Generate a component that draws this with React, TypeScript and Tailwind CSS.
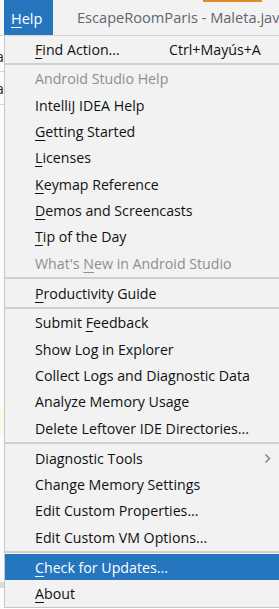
import React from "react";

type Item =
  | { t: string; m?: number; d?: boolean; k?: string; sub?: boolean; sel?: boolean }
  | "sep";

const items: Item[] = [
  { t: "Find Action...", m: 0, k: "Ctrl+Mayús+A" },
  "sep",
  { t: "Android Studio Help", d: true },
  { t: "IntelliJ IDEA Help" },
  { t: "Getting Started", m: 0 },
  { t: "Licenses", m: 0 },
  { t: "Keymap Reference", m: 0 },
  { t: "Demos and Screencasts", m: 0 },
  { t: "Tip of the Day", m: 0 },
  { t: "What's New in Android Studio", m: 7, d: true },
  "sep",
  { t: "Productivity Guide", m: 0 },
  "sep",
  { t: "Submit Feedback", m: 7 },
  { t: "Show Log in Explorer" },
  { t: "Collect Logs and Diagnostic Data" },
  { t: "Analyze Memory Usage" },
  { t: "Delete Leftover IDE Directories..." },
  "sep",
  { t: "Diagnostic Tools", sub: true },
  { t: "Change Memory Settings" },
  { t: "Edit Custom Properties..." },
  { t: "Edit Custom VM Options..." },
  "sep",
  { t: "Check for Updates...", m: 0, sel: true },
  { t: "About", m: 0 },
];

function Label({ t, m }: { t: string; m?: number }) {
  if (m === undefined) return <span>{t}</span>;
  return (
    <span>
      {t.slice(0, m)}
      <span className="underline decoration-1 underline-offset-[3px]">{t[m]}</span>
      {t.slice(m + 1)}
    </span>
  );
}

function Frag() {
  return (
    <div className="h-[16px] w-[4px] overflow-hidden flex items-center">
      <span className="-ml-[4px] text-[14px] leading-none text-[#222]">a</span>
    </div>
  );
}

export default function App() {
  return (
    <div
      className="w-[279px] h-[609px] overflow-hidden bg-white flex flex-col"
      style={{ fontFamily: '"Open Sans", "Noto Sans", sans-serif' }}
    >
      {/* top bar */}
      <div className="h-[35px] flex bg-[#f2f2f2] shrink-0">
        <div className="w-[4px] bg-[#f7f7f7]" />
        <div className="w-[49px] h-full bg-[#2675bf] text-white text-[14.5px] flex items-center pl-[7px] pt-[3px]">
          <Label t="Help" m={0} />
        </div>
        <div className="flex-1 flex flex-col overflow-hidden">
          <div className="h-[2px] flex">
            <div className="w-[150px]" />
            <div className="w-[59px] bg-[#e08a2c]" />
          </div>
          <div className="flex-1 flex items-center pl-[24px] whitespace-nowrap text-[14.6px] text-[#5f6670] pb-[1px]">
            EscapeRoomParis - Maleta.java
          </div>
        </div>
      </div>
      <div className="h-[1px] bg-[#d6d6d6] shrink-0" />
      {/* body */}
      <div className="flex flex-1 min-h-0">
        <div className="w-[4px] flex flex-col bg-[#fdfdfd] shrink-0">
          <div className="h-[13px]" />
          <Frag />
          <div className="h-[6px]" />
          <div className="h-[1px] bg-[#d2d2d2]" />
          <div className="h-[9px]" />
          <Frag />
          <div className="h-[7px]" />
          <div className="h-[1px] bg-[#d2d2d2]" />
          <div className="h-[302px]" />
          <div className="h-[28px] bg-[#fcf9e6]" />
          <div className="h-[147px]" />
          <div className="h-[6px] bg-[#d9d9d9]" />
        </div>
        <div className="flex-1 self-start bg-[#f2f2f2] border-l border-b border-[#c6c6c6] text-[14.2px] whitespace-nowrap">
          {items.map((it, i) =>
            it === "sep" ? (
              <div key={i} className="h-[3.5px] flex items-center">
                <div className="h-[2px] w-full bg-[#cfcfcf]" />
              </div>
            ) : (
              <div
                key={i}
                className={
                  "h-[26.35px] flex items-center pl-[30px] " +
                  (it.sel
                    ? "bg-[#2675bf] text-white"
                    : it.d
                    ? "text-[#8e8e8e]"
                    : "text-[#111111]")
                }
              >
                <div className={it.k ? "w-[134px]" : ""}>
                  <Label t={it.t} m={it.m} />
                </div>
                {it.k && <div>{it.k}</div>}
                {it.sub && (
                  <div className="ml-auto mr-[8px]">
                    <svg width="7" height="11" viewBox="0 0 7 11">
                      <polyline
                        points="1.5,1.5 5.5,5.5 1.5,9.5"
                        fill="none"
                        stroke="#7b7b7b"
                        strokeWidth="1.4"
                      />
                    </svg>
                  </div>
                )}
              </div>
            )
          )}
        </div>
      </div>
    </div>
  );
}
